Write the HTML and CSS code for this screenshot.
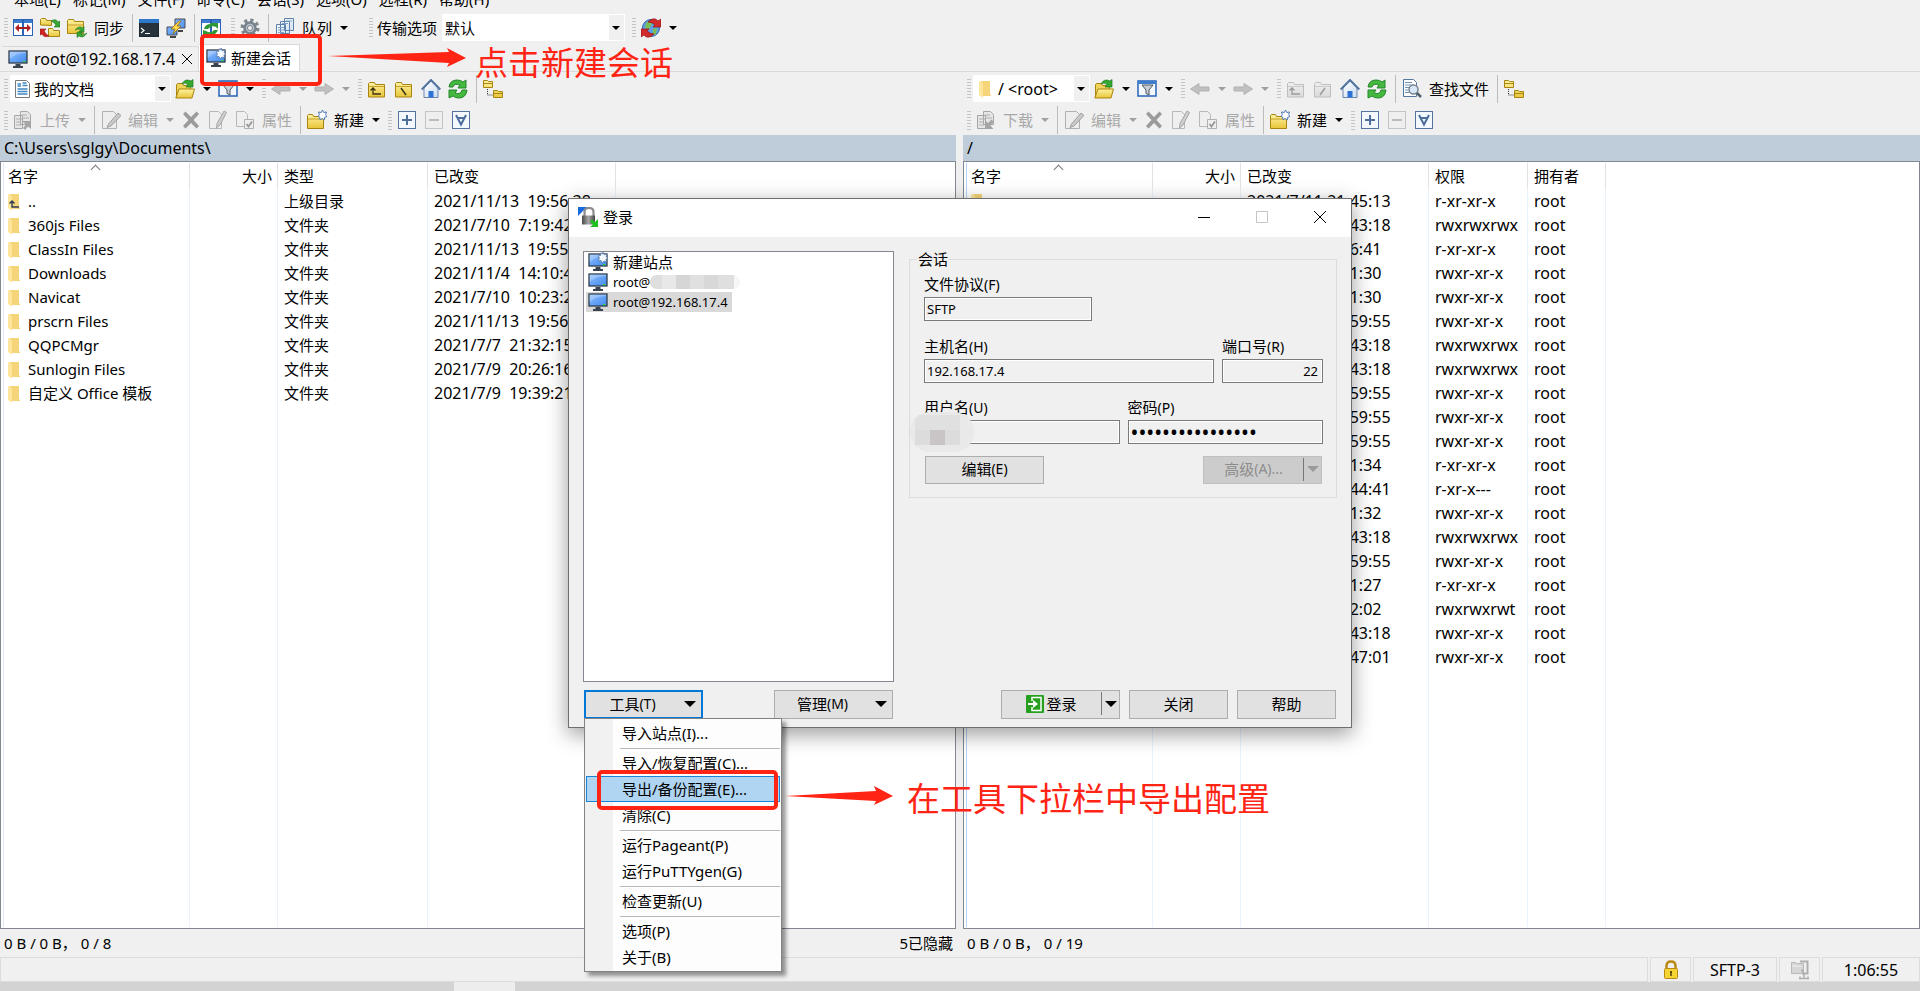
FILE: index.html
```html
<!DOCTYPE html>
<html lang="zh-CN">
<head>
    <meta charset="UTF-8">
    <meta name="viewport" content="width=device-width, initial-scale=1.0">
    <title>root@192.168.17.4</title>
    <link rel="stylesheet" href="styles.css">
</head>
<body>
    <!-- Icon set -->
    <svg class="defs" width="0" height="0">
        <defs>
            <linearGradient id="gold" x1="0" y1="0" x2="0" y2="1"><stop offset="0" stop-color="#fdf3a0"/><stop offset="1" stop-color="#e9c53a"/></linearGradient>
            <linearGradient id="screen" x1="0" y1="0" x2="1" y2="1"><stop offset="0" stop-color="#8fc1ff"/><stop offset="1" stop-color="#3f87ee"/></linearGradient>
            <linearGradient id="sheet" x1="0" y1="0" x2="1" y2="1"><stop offset="0" stop-color="#ffffff"/><stop offset="1" stop-color="#c9dcf0"/></linearGradient>
            <linearGradient id="metal" x1="0" y1="0" x2="1" y2="0"><stop offset="0" stop-color="#4a4a4a"/><stop offset=".5" stop-color="#a8a8a8"/><stop offset="1" stop-color="#444"/></linearGradient>
        </defs>
        <symbol id="i-split" viewBox="0 0 20 20"><rect x=".5" y="1.5" width="19" height="16" fill="#fff" stroke="#2b63b4"/><rect x="1" y="2" width="18" height="3" fill="#3c7dd0"/><path d="M10 2v16" stroke="#2b63b4" stroke-width="2"/><path d="M4 10h12" stroke="#a32020" stroke-width="2"/><path d="M2 10l4-4v8zM18 10l-4-4v8z" fill="#b32020"/></symbol>
        <symbol id="i-syncdirs" viewBox="0 0 20 20"><path d="M.5 7V1.500l1-1h4l1 2h5v5z" fill="url(#gold)" stroke="#a88411"/><path d="M8.500 18.500v-8h4l1 2h6v6z" fill="url(#gold)" stroke="#a88411"/><path d="M11 3q5-3 7 1l2-1v6h-6l2-2q-2-3-5-4z" fill="#3aa636" stroke="#227a20" stroke-width=".6"/><path d="M9 18q-5 2-7-2l-2 1v-6h6l-2 2q2 4 5 5z" fill="#d02424" stroke="#8d1414" stroke-width=".6"/></symbol>
        <symbol id="i-syncfolder" viewBox="0 0 20 20"><path d="M.5 15.500V2.500l1-1h5l1 2h9v12z" fill="url(#gold)" stroke="#a88411"/><path d="M1 7h15" stroke="#c6a02a"/><path d="M8 12q4-5 8-2l1-1.500V14h-5l1.500-1.500Q11 10 8 12zM20 15q-4 6-8 3l-2 1.500V14h5.500L14 15.500q3 2 6-.5z" fill="#3aa636" stroke="#227a20" stroke-width=".6"/></symbol>
        <symbol id="i-terminal" viewBox="0 0 20 20"><rect x=".5" y="1.500" width="19" height="17" fill="#28323c" stroke="#1d2730"/><path d="M0 1h20v4H0z" fill="#2e78cc"/><path d="M2 10l3 2.500L2 15M6 15.500h5" fill="none" stroke="#fff" stroke-width="1.200"/></symbol>
        <symbol id="i-putty" viewBox="0 0 20 20"><path d="M9 1h10v9H9zM1 9h10v8H1z" fill="url(#screen)" stroke="#4b4b55"/><path d="M12 12h5v2h-5zM4 18h6v2H4z" fill="#444"/><path d="M13 3L5 11h4l-2 5 8-8h-4l4-5z" fill="#ffd84a" stroke="#9a6d10" stroke-width=".8"/></symbol>
        <symbol id="i-refreshpanes" viewBox="0 0 20 20"><rect x=".5" y="1.500" width="19" height="17" fill="#fff" stroke="#2b63b4"/><path d="M1 2h18v3H1z" fill="#3c7dd0"/><path d="M10 2v16" stroke="#2b63b4" stroke-width="2"/><path d="M3 11q1-5 7-5l-1-1h8v6l-2-2q-5-2-8 2zM17 12q-2 5-7 5l1 1H2v-6l3 1q5 3 8-1z" fill="#2f9a35"/></symbol>
        <symbol id="i-gear" viewBox="0 0 20 20"><circle cx="10" cy="10" r="7.500" fill="none" stroke="#7d8790" stroke-width="4" stroke-dasharray="3 2.890"/><circle cx="10" cy="10" r="5.500" fill="#b7c0c8" stroke="#77828c" stroke-width="2.500"/><circle cx="10" cy="10" r="2.500" fill="#f0f0f0" stroke="#77828c"/></symbol>
        <symbol id="i-queue" viewBox="0 0 20 20"><path d="M9.500.5h9v12h-9zM5.500 3.500h9v12h-9zM1.500 6.500h9v12h-9z" fill="url(#sheet)" stroke="#5c82ac"/><path d="M3 9.500h6M3 12h6M3 14.500h6M11 3h6M7 5.500h6" stroke="#7ea3c9"/></symbol>
        <symbol id="i-globe" viewBox="0 0 20 20"><circle cx="10" cy="10" r="8.500" fill="#5e9fe6" stroke="#2f62a8"/><path d="M5 5q4-3 6 1l-3 5-4-1zM12 11l4-1-1 6-3 1z" fill="#7bbf53"/><path d="M7 4q6-6 10-1l3-2v8h-8l2-2q-3-3-7-3zM13 16q-6 6-10 1l-3 2v-8h8l-2 2q3 3 7 3z" fill="#d22b2b" stroke="#8d1616" stroke-width=".7"/></symbol>
        <symbol id="i-monitor" viewBox="0 0 20 20"><rect x="1" y="2" width="18" height="12" fill="url(#screen)" stroke="#2f3b49" stroke-width="1.300"/><path d="M1.500 10Q8 4 18 4V2.500H1.500z" fill="#fff" opacity=".25"/><path d="M7.500 15h5v2h-5zM5 17h10v2H5z" fill="#3a4450"/><path d="M15 12h2.500v1.200H15z" fill="#35d235"/></symbol>
        <symbol id="i-newmonitor" viewBox="0 0 20 20"><use href="#i-monitor"/><path d="M15 0l1.200 2.800L19 2l-.9 2.800L20 6l-2 1.200.5 2.800-2.700-.9L14 11l-1-2.500-2.900.3L11.500 6 10 4l2.700-.5.3-2.700L15 2z" fill="#f4faff" stroke="#5878a4" stroke-width=".8"/></symbol>
        <symbol id="i-doc" viewBox="0 0 20 20"><path d="M3.500 1.500h11l3 3v14h-14z" fill="#fff" stroke="#777"/><path d="M5.500 5H9M5.500 7h3.500M10.500 4h4M10.500 6.500h5M5.500 10h10M5.500 12.500h10M5.500 15h10" stroke="#3c86c4" stroke-width="1.300"/></symbol>
        <symbol id="i-open" viewBox="0 0 20 20"><path d="M1.500 18.500V5.500l1-1h5l1 2h7v12z" fill="#f0d35b" stroke="#a88411"/><path d="M.8 19L4 10h15.500L17 19z" fill="url(#gold)" stroke="#a88411"/><path d="M7 5q3-6 9-3l2-1.500V8h-7l2-2.500Q10 3 7 5z" fill="#35a832" stroke="#1e7a1e" stroke-width=".7"/></symbol>
        <symbol id="i-filter" viewBox="0 0 20 20"><rect x="1" y="2" width="18" height="15" fill="#f3f8fe" stroke="#2463b6" stroke-width="1.500"/><path d="M1 2h18v3H1z" fill="#3c7dd0"/><path d="M5 6h11l-4 5v5l-3-1.500V11z" fill="#c8ced6" stroke="#4d5661"/></symbol>
        <symbol id="i-back" viewBox="0 0 20 20"><path d="M.5 10L9 4.500V8h10v4H9v3.500z" fill="#c0c0c0" stroke="#b2b2b2"/></symbol>
        <symbol id="i-forward" viewBox="0 0 20 20"><path d="M19.500 10L11 4.500V8H1v4h10v3.500z" fill="#c0c0c0" stroke="#b2b2b2"/></symbol>
        <symbol id="i-up" viewBox="0 0 20 20"><path d="M1.500 18V4.500l1-1h5l1 2h9V18z" fill="url(#gold)" stroke="#a88411"/><path d="M2 7.500h15" stroke="#c6a02a"/><path d="M6 9v6h8M3.500 11.500L6 9l2.500 2.500" fill="none" stroke="#3a3410" stroke-width="1.300"/></symbol>
        <symbol id="i-rootdir" viewBox="0 0 20 20"><path d="M1.500 18V4.500l1-1h5l1 2h9V18z" fill="url(#gold)" stroke="#a88411"/><path d="M2 7.500h15" stroke="#c6a02a"/><path d="M7 9l5 7" stroke="#3a3410" stroke-width="1.500"/></symbol>
        <symbol id="i-rootslash" viewBox="0 0 20 20"><path d="M1.500 18V4.500l1-1h5l1 2h9V18z" fill="url(#gold)" stroke="#a88411"/><path d="M2 7.500h15" stroke="#c6a02a"/><path d="M12 9l-5 7" stroke="#3a3410" stroke-width="1.500"/></symbol>
        <symbol id="i-home" viewBox="0 0 20 20"><path d="M3 9v9.500h14V9l-7-7z" fill="url(#sheet)" stroke="#6b86ab"/><path d="M.7 10.500L10 1l9.300 9.500" fill="none" stroke="#53749f" stroke-width="2"/><path d="M7.500 12h5v6.500h-5z" fill="#2d73d6"/></symbol>
        <symbol id="i-refresh" viewBox="0 0 20 20"><path d="M1 8Q2 1 9 1q4 0 6 2l3-2v8h-8l2-3Q6 4 5 8zM19 11q-1 8-8 8-4 0-6-2l-4 2v-8h8l-2 3q6 2 7-3z" fill="#45b83f" stroke="#23862a"/></symbol>
        <symbol id="i-tree" viewBox="0 0 20 20"><path d="M.5 8.500V1.500h4l1 1h4v6zM10.500 18.500v-7h4l1 1h4v6z" fill="url(#gold)" stroke="#a88411"/><path d="M.5 4.500h9M10.500 14.500h9" stroke="#a88411"/><path d="M4.500 10v6h5" fill="none" stroke="#333" stroke-dasharray="1 1"/></symbol>
        <symbol id="i-find" viewBox="0 0 20 20"><path d="M1.500.5h10l3 3v14h-13z" fill="#fff" stroke="#54779f"/><path d="M3 3.500h7M3 6h9M3 8.500h4M3 11h3M3 13.500h4" stroke="#6c92ba"/><circle cx="11.500" cy="10.500" r="4.500" fill="#d5e7f8" stroke="#7b858e" stroke-width="1.500"/><path d="M15 14l4 4" stroke="#56606a" stroke-width="2.500"/></symbol>
        <symbol id="i-copy" viewBox="0 0 20 20"><path d="M7.500 1.500h7l3 3v10h-10zM1.500 5.500h8v13h-8z" fill="#e6e6e6" stroke="#a6a6a6"/><path d="M3 9h6M3 12h5M3 15h5M9 5h5M9 8h7" stroke="#b0b0b0"/><path d="M9 11h9v8l-3-2.500L12 20l-2-2 3-3.500z" fill="#a5a5a5"/></symbol>
        <symbol id="i-copydown" viewBox="0 0 20 20"><path d="M7.500 1.500h7l3 3v10h-10zM1.500 5.500h8v13h-8z" fill="#e6e6e6" stroke="#a6a6a6"/><path d="M3 9h6M3 12h5M3 15h5M9 5h5M9 8h7" stroke="#b0b0b0"/><path d="M9 19v-9l3 3 3.500-3.500 2.500 2.500-3.500 3.500 3 3.500z" fill="#a5a5a5"/></symbol>
        <symbol id="i-edit" viewBox="0 0 20 20"><path d="M1.500 1.500h11l3 3v14h-14z" fill="#ededed" stroke="#b0b0b0"/><path d="M17 3l3 2.500L10 16l-4 1.500L7.500 14z" fill="#c8c8c8" stroke="#a2a2a2"/></symbol>
        <symbol id="i-delete" viewBox="0 0 20 20"><path d="M2 4l2.500-2.500L10 7l5.500-5.500L18 4l-5.500 6L18 16l-2.500 2.500L10 13l-5.500 5.500L2 16l5.500-6z" fill="#9b9b9b"/></symbol>
        <symbol id="i-rename" viewBox="0 0 20 20"><path d="M1.500 1.500h9l3 3v14h-12z" fill="#efefef" stroke="#b8b8b8"/><path d="M16 1l2.500 1.500L12 15l-3.500 3 .5-4.500z" fill="#cfcfcf" stroke="#a6a6a6"/></symbol>
        <symbol id="i-props" viewBox="0 0 20 20"><path d="M1.500 1.500h8l3 3v12h-11z" fill="#efefef" stroke="#b8b8b8"/><path d="M9.500 9.500h9v9h-9z" fill="#efefef" stroke="#b0b0b0"/><path d="M11.500 14l2 2.500 3.500-5" fill="none" stroke="#979797" stroke-width="1.800"/></symbol>
        <symbol id="i-newfolder" viewBox="0 0 20 20"><path d="M.5 18.500V5.500l1-1h4l1 2h10v12z" fill="url(#gold)" stroke="#a88411"/><path d="M1 9h15" stroke="#c6a02a"/><path d="M15.500 0l1.200 2.500L19.500 2l-.9 2.600L20 6.500l-2.300.7-.2 2.600-2.200-1.300-2.300 1.300-.2-2.600L11 6.500l1.400-1.900L11.500 2l2.800.5z" fill="#fff" stroke="#4f79b5"/></symbol>
        <symbol id="i-plus" viewBox="0 0 20 20"><rect x="1.500" y="1.500" width="17" height="17" fill="#f3f8fe" stroke="#54749f"/><path d="M10 5v10M5 10h10" stroke="#4c6e9d" stroke-width="2"/></symbol>
        <symbol id="i-minus" viewBox="0 0 20 20"><rect x="1.500" y="1.500" width="17" height="17" fill="#efefef" stroke="#c4c4c4"/><path d="M5 10h10" stroke="#bcbcbc" stroke-width="2"/></symbol>
        <symbol id="i-invert" viewBox="0 0 20 20"><rect x="1.500" y="1.500" width="17" height="17" fill="#f3f8fe" stroke="#54749f"/><path d="M5 5l5 9.500L15 5M6.500 8h7" fill="none" stroke="#4c6e9d" stroke-width="2"/></symbol>
        <symbol id="i-folder" viewBox="0 0 12 18"><path d="M2 1h9v13l1 1v1H2z" fill="#f6d57a"/><path d="M0 1l4 2v15l-4-3z" fill="#fde69b"/></symbol>
        <symbol id="i-parent" viewBox="0 0 12 18"><use href="#i-folder"/><path d="M4 8v6h7M1.500 10.500L4 8l2.500 2.500" fill="none" stroke="#2d3c50" stroke-width="1.400"/></symbol>
        <symbol id="i-app" viewBox="0 0 20 20"><path d="M0 0h9L0 9z" fill="#1769e0"/><path d="M6.500 9V5q0-4 4.500-4t4.500 4v4" fill="none" stroke="#8b8b8b" stroke-width="2.200"/><rect x="4" y="8.500" width="13" height="9" fill="url(#metal)"/><path d="M20 12v8h-8l3-2.500-3-3 2-2 3 2.500z" fill="#1fc11f"/></symbol>
        <symbol id="i-login" viewBox="0 0 18 18"><rect width="18" height="18" rx="1" fill="#27a01f"/><path d="M6 6V2.500h9v13H6V12" fill="none" stroke="#fff" stroke-width="1.500"/><path d="M2 8h5V5l5 4-5 4v-3H2z" fill="#fff"/></symbol>
        <symbol id="i-lock" viewBox="0 0 20 20"><path d="M5.500 9V6q0-4.500 4.500-4.500T14.500 6v3" fill="none" stroke="#b88a14" stroke-width="2.500"/><rect x="3.500" y="8.500" width="13" height="10" rx="1" fill="#f3d432" stroke="#b88a14"/><path d="M10 11v5M9 12h2" stroke="#5b420a" stroke-width="1.500"/></symbol>
        <symbol id="i-archive" viewBox="0 0 20 20"><path d="M1.500 13.500v-11h4l1 1h7v10z" fill="#d6d6d6" stroke="#b8b8b8"/><path d="M2 6h9" stroke="#efefef"/><path d="M10 1.500h7.500v12H13v-3h-2" fill="none" stroke="#b0b0b0" stroke-width="2"/><path d="M14 14v4M9 18.500h10M10 16.500v3M18 16.500v3" fill="none" stroke="#b0b0b0" stroke-width="1.500"/></symbol>
    </svg>

    <nav class="menubar">
        <a href="#">本地(L)</a><a href="#">标记(M)</a><a href="#">文件(F)</a><a href="#">命令(C)</a><a href="#">会话(S)</a><a href="#">选项(O)</a><a href="#">远程(R)</a><a href="#">帮助(H)</a>
    </nav>

    <div class="toolbar main">
        <div class="group">
            <button class="tool"><svg><use href="#i-split"/></svg></button>
            <button class="tool"><svg><use href="#i-syncdirs"/></svg></button>
            <button class="tool"><svg><use href="#i-syncfolder"/></svg>同步</button>
            <i class="sep"></i>
            <button class="tool"><svg><use href="#i-terminal"/></svg></button>
            <button class="tool"><svg><use href="#i-putty"/></svg></button>
            <i class="sep"></i>
            <button class="tool"><svg><use href="#i-refreshpanes"/></svg></button>
        </div>
        <div class="group wide">
            <button class="tool"><svg><use href="#i-gear"/></svg></button>
            <i class="sep"></i>
            <button class="tool"><svg><use href="#i-queue"/></svg>队列</button>
            <button class="caret" aria-label="队列"></button>
        </div>
        <div class="group">
            <label class="tool-label" for="transfer">传输选项</label>
            <div class="combo transfer">
                <select id="transfer"><option>默认</option></select>
            </div>
        </div>
        <div class="group">
            <button class="tool"><svg><use href="#i-globe"/></svg></button>
            <button class="caret" aria-label="更多"></button>
        </div>
    </div>

    <div class="tabs">
        <div class="tab">
            <svg><use href="#i-monitor"/></svg><a href="#">root@192.168.17.4</a>
            <button class="tab-close" aria-label="关闭"><svg viewBox="0 0 12 12"><path d="M1 1l10 10M11 1L1 11"/></svg></button>
        </div>
        <div class="tab active"><svg><use href="#i-newmonitor"/></svg><a href="#">新建会话</a></div>
    </div>

    <main class="panes">
        <section class="pane">
            <div class="toolbar nav">
                <div class="group">
                    <div class="combo drive">
                        <svg><use href="#i-doc"/></svg>
                        <select aria-label="位置"><option>我的文档</option></select>
                    </div>
                    <button class="tool"><svg><use href="#i-open"/></svg></button>
                    <button class="caret" aria-label="打开"></button>
                    <button class="tool"><svg><use href="#i-filter"/></svg></button>
                    <button class="caret" aria-label="过滤"></button>
                </div>
                <div class="group">
                    <button class="tool" disabled><svg><use href="#i-back"/></svg></button>
                    <button class="caret" aria-label="后退" disabled></button>
                    <button class="tool" disabled><svg><use href="#i-forward"/></svg></button>
                    <button class="caret" aria-label="前进" disabled></button>
                </div>
                <div class="group">
                    <button class="tool"><svg><use href="#i-up"/></svg></button>
                    <button class="tool"><svg><use href="#i-rootdir"/></svg></button>
                    <button class="tool"><svg><use href="#i-home"/></svg></button>
                    <button class="tool"><svg><use href="#i-refresh"/></svg></button>
                    <i class="sep"></i>
                    <button class="tool"><svg><use href="#i-tree"/></svg></button>
                </div>
            </div>
            <div class="toolbar files">
                <div class="group">
                    <button class="tool" disabled><svg><use href="#i-copy"/></svg>上传</button>
                    <button class="caret" aria-label="上传" disabled></button>
                    <i class="sep"></i>
                    <button class="tool" disabled><svg><use href="#i-edit"/></svg>编辑</button>
                    <button class="caret" aria-label="编辑" disabled></button>
                    <button class="tool" disabled><svg><use href="#i-delete"/></svg></button>
                    <button class="tool" disabled><svg><use href="#i-rename"/></svg></button>
                    <button class="tool" disabled><svg><use href="#i-props"/></svg>属性</button>
                    <i class="sep"></i>
                    <button class="tool"><svg><use href="#i-newfolder"/></svg>新建</button>
                    <button class="caret" aria-label="新建"></button>
                </div>
                <div class="group">
                    <button class="tool"><svg><use href="#i-plus"/></svg></button>
                    <button class="tool" disabled><svg><use href="#i-minus"/></svg></button>
                    <button class="tool"><svg><use href="#i-invert"/></svg></button>
                </div>
            </div>
            <div class="path">C:\Users\sglgy\Documents\</div>
            <div class="list">
                <table class="local">
                    <colgroup><col class="c-name"><col class="c-size"><col class="c-type"><col class="c-date"><col></colgroup>
                    <thead>
                        <tr><th class="sorted">名字</th><th class="num">大小</th><th>类型</th><th>已改变</th><th></th></tr>
                    </thead>
                    <tbody>
                        <tr><td><svg><use href="#i-parent"/></svg>..</td><td></td><td>上级目录</td><td class="date">2021/11/13  19:56:38</td><td></td></tr>
                        <tr><td><svg><use href="#i-folder"/></svg>360js Files</td><td></td><td>文件夹</td><td class="date">2021/7/10  7:19:42</td><td></td></tr>
                        <tr><td><svg><use href="#i-folder"/></svg>ClassIn Files</td><td></td><td>文件夹</td><td class="date">2021/11/13  19:55:</td><td></td></tr>
                        <tr><td><svg><use href="#i-folder"/></svg>Downloads</td><td></td><td>文件夹</td><td class="date">2021/11/4  14:10:4</td><td></td></tr>
                        <tr><td><svg><use href="#i-folder"/></svg>Navicat</td><td></td><td>文件夹</td><td class="date">2021/7/10  10:23:2</td><td></td></tr>
                        <tr><td><svg><use href="#i-folder"/></svg>prscrn Files</td><td></td><td>文件夹</td><td class="date">2021/11/13  19:56:</td><td></td></tr>
                        <tr><td><svg><use href="#i-folder"/></svg>QQPCMgr</td><td></td><td>文件夹</td><td class="date">2021/7/7  21:32:15</td><td></td></tr>
                        <tr><td><svg><use href="#i-folder"/></svg>Sunlogin Files</td><td></td><td>文件夹</td><td class="date">2021/7/9  20:26:16</td><td></td></tr>
                        <tr><td><svg><use href="#i-folder"/></svg>自定义 Office 模板</td><td></td><td>文件夹</td><td class="date">2021/7/9  19:39:21</td><td></td></tr>
                        <tr class="fill"><td></td><td></td><td></td><td></td><td></td></tr>
                    </tbody>
                </table>
            </div>
            <div class="summary"><span>0 B / 0 B， 0 / 8</span><span>5已隐藏</span></div>
        </section>

        <section class="pane remote-pane">
            <div class="toolbar nav">
                <div class="group">
                    <div class="combo remote-root">
                        <svg class="narrow"><use href="#i-folder"/></svg>
                        <select aria-label="位置"><option>/ &lt;root&gt;</option></select>
                    </div>
                    <button class="tool"><svg><use href="#i-open"/></svg></button>
                    <button class="caret" aria-label="打开"></button>
                    <button class="tool"><svg><use href="#i-filter"/></svg></button>
                    <button class="caret" aria-label="过滤"></button>
                </div>
                <div class="group">
                    <button class="tool" disabled><svg><use href="#i-back"/></svg></button>
                    <button class="caret" aria-label="后退" disabled></button>
                    <button class="tool" disabled><svg><use href="#i-forward"/></svg></button>
                    <button class="caret" aria-label="前进" disabled></button>
                </div>
                <div class="group">
                    <button class="tool off" disabled><svg><use href="#i-up"/></svg></button>
                    <button class="tool off" disabled><svg><use href="#i-rootslash"/></svg></button>
                    <button class="tool"><svg><use href="#i-home"/></svg></button>
                    <button class="tool"><svg><use href="#i-refresh"/></svg></button>
                    <i class="sep"></i>
                    <button class="tool"><svg><use href="#i-find"/></svg>查找文件</button>
                    <i class="sep"></i>
                    <button class="tool"><svg><use href="#i-tree"/></svg></button>
                </div>
            </div>
            <div class="toolbar files">
                <div class="group">
                    <button class="tool" disabled><svg><use href="#i-copydown"/></svg>下载</button>
                    <button class="caret" aria-label="下载" disabled></button>
                    <i class="sep"></i>
                    <button class="tool" disabled><svg><use href="#i-edit"/></svg>编辑</button>
                    <button class="caret" aria-label="编辑" disabled></button>
                    <button class="tool" disabled><svg><use href="#i-delete"/></svg></button>
                    <button class="tool" disabled><svg><use href="#i-rename"/></svg></button>
                    <button class="tool" disabled><svg><use href="#i-props"/></svg>属性</button>
                    <i class="sep"></i>
                    <button class="tool"><svg><use href="#i-newfolder"/></svg>新建</button>
                    <button class="caret" aria-label="新建"></button>
                </div>
                <div class="group">
                    <button class="tool"><svg><use href="#i-plus"/></svg></button>
                    <button class="tool" disabled><svg><use href="#i-minus"/></svg></button>
                    <button class="tool"><svg><use href="#i-invert"/></svg></button>
                </div>
            </div>
            <div class="path">/</div>
            <div class="list focused">
                <table class="remote">
                    <colgroup><col class="c-name"><col class="c-size"><col class="c-date"><col class="c-perm"><col class="c-owner"><col></colgroup>
                    <thead>
                        <tr><th class="sorted">名字</th><th class="num">大小</th><th>已改变</th><th>权限</th><th>拥有者</th><th></th></tr>
                    </thead>
                    <tbody>
                        <tr><td><svg><use href="#i-folder"/></svg></td><td></td><td class="date">2021/7/11 21:45:13</td><td class="lat">r-xr-xr-x</td><td class="lat">root</td><td></td></tr>
                        <tr><td></td><td></td><td class="date">2021/7/11 21:43:18</td><td class="lat">rwxrwxrwx</td><td class="lat">root</td><td></td></tr>
                        <tr><td></td><td></td><td class="date">2021/7/11 9:56:41</td><td class="lat">r-xr-xr-x</td><td class="lat">root</td><td></td></tr>
                        <tr><td></td><td></td><td class="date">2021/7/11 9:51:30</td><td class="lat">rwxr-xr-x</td><td class="lat">root</td><td></td></tr>
                        <tr><td></td><td></td><td class="date">2021/7/11 9:51:30</td><td class="lat">rwxr-xr-x</td><td class="lat">root</td><td></td></tr>
                        <tr><td></td><td></td><td class="date">2018/4/11 12:59:55</td><td class="lat">rwxr-xr-x</td><td class="lat">root</td><td></td></tr>
                        <tr><td></td><td></td><td class="date">2021/7/11 21:43:18</td><td class="lat">rwxrwxrwx</td><td class="lat">root</td><td></td></tr>
                        <tr><td></td><td></td><td class="date">2021/7/11 21:43:18</td><td class="lat">rwxrwxrwx</td><td class="lat">root</td><td></td></tr>
                        <tr><td></td><td></td><td class="date">2018/4/11 12:59:55</td><td class="lat">rwxr-xr-x</td><td class="lat">root</td><td></td></tr>
                        <tr><td></td><td></td><td class="date">2018/4/11 12:59:55</td><td class="lat">rwxr-xr-x</td><td class="lat">root</td><td></td></tr>
                        <tr><td></td><td></td><td class="date">2018/4/11 12:59:55</td><td class="lat">rwxr-xr-x</td><td class="lat">root</td><td></td></tr>
                        <tr><td></td><td></td><td class="date">2021/7/11 9:51:34</td><td class="lat">r-xr-xr-x</td><td class="lat">root</td><td></td></tr>
                        <tr><td></td><td></td><td class="date">2021/7/11 21:44:41</td><td class="lat">r-xr-x---</td><td class="lat">root</td><td></td></tr>
                        <tr><td></td><td></td><td class="date">2021/7/11 9:51:32</td><td class="lat">rwxr-xr-x</td><td class="lat">root</td><td></td></tr>
                        <tr><td></td><td></td><td class="date">2021/7/11 21:43:18</td><td class="lat">rwxrwxrwx</td><td class="lat">root</td><td></td></tr>
                        <tr><td></td><td></td><td class="date">2018/4/11 12:59:55</td><td class="lat">rwxr-xr-x</td><td class="lat">root</td><td></td></tr>
                        <tr><td></td><td></td><td class="date">2021/7/11 9:51:27</td><td class="lat">r-xr-xr-x</td><td class="lat">root</td><td></td></tr>
                        <tr><td></td><td></td><td class="date">2021/7/11 9:52:02</td><td class="lat">rwxrwxrwt</td><td class="lat">root</td><td></td></tr>
                        <tr><td></td><td></td><td class="date">2021/7/11 21:43:18</td><td class="lat">rwxr-xr-x</td><td class="lat">root</td><td></td></tr>
                        <tr><td></td><td></td><td class="date">2021/7/11 21:47:01</td><td class="lat">rwxr-xr-x</td><td class="lat">root</td><td></td></tr>
                        <tr class="fill"><td></td><td></td><td></td><td></td><td></td><td></td></tr>
                    </tbody>
                </table>
            </div>
            <div class="summary"><span>0 B / 0 B， 0 / 19</span></div>
        </section>
    </main>

    <footer class="statusbar">
        <div class="cell grow"></div>
        <div class="cell icon"><svg><use href="#i-lock"/></svg></div>
        <div class="cell proto">SFTP-3</div>
        <div class="cell icon"><svg><use href="#i-archive"/></svg></div>
        <div class="cell time">1:06:55</div>
    </footer>
    <div class="taskbar"><div class="task"></div></div>

    <!-- Login window -->
    <div class="dialog" role="dialog" aria-label="登录">
        <header class="titlebar">
            <svg class="app"><use href="#i-app"/></svg>
            <span>登录</span>
            <button aria-label="最小化"><svg viewBox="0 0 12 12"><path d="M0 6.500h12"/></svg></button>
            <button aria-label="最大化" disabled><svg viewBox="0 0 12 12"><path d="M.5.5h11v11H.5z"/></svg></button>
            <button aria-label="关闭"><svg viewBox="0 0 12 12"><path d="M0 0l12 12M12 0L0 12"/></svg></button>
        </header>
        <form class="login">
            <ul class="sites">
                <li><svg><use href="#i-newmonitor"/></svg><span class="cn">新建站点</span></li>
                <li><svg><use href="#i-monitor"/></svg>root@<span class="mosaic"></span></li>
                <li class="selected"><svg><use href="#i-monitor"/></svg>root@192.168.17.4</li>
            </ul>
            <fieldset>
                <legend>会话</legend>
                <div class="row">
                    <div class="field protocol"><label for="protocol">文件协议<small>(F)</small></label><input id="protocol" type="text" value="SFTP" readonly></div>
                </div>
                <div class="row">
                    <div class="field grow"><label for="host">主机名<small>(H)</small></label><input id="host" type="text" value="192.168.17.4" readonly></div>
                    <div class="field port"><label for="port">端口号<small>(R)</small></label><input id="port" type="text" value="22" readonly></div>
                </div>
                <div class="row">
                    <div class="field grow user"><label for="user">用户名<small>(U)</small></label><input id="user" type="text" readonly><span class="mosaic-user"></span></div>
                    <div class="field grow"><label for="pass">密码<small>(P)</small></label><input id="pass" type="password" value="0000000000000000" readonly></div>
                </div>
                <div class="actions">
                    <button type="button" class="btn">编辑<small>(E)</small></button>
                    <button type="button" class="btn split" disabled><span>高级<small>(A)...</small></span><i class="arrow"></i></button>
                </div>
            </fieldset>
            <div class="buttons left">
                <div class="dropdown">
                    <button type="button" class="btn drop open"><span>工具<small>(T)</small></span><i class="arrow"></i></button>
                    <div class="menu">
                        <button type="button">导入站点(I)...</button>
                        <hr>
                        <button type="button">导入/恢复配置(C)...</button>
                        <button type="button" class="hover">导出/备份配置(E)...</button>
                        <button type="button">清除(C)</button>
                        <hr>
                        <button type="button">运行Pageant(P)</button>
                        <button type="button">运行PuTTYgen(G)</button>
                        <hr>
                        <button type="button">检查更新(U)</button>
                        <hr>
                        <button type="button">选项(P)</button>
                        <button type="button">关于(B)</button>
                    </div>
                </div>
                <button type="button" class="btn drop"><span>管理<small>(M)</small></span><i class="arrow"></i></button>
            </div>
            <div class="buttons right">
                <button type="button" class="btn split"><span><svg><use href="#i-login"/></svg>登录</span><i class="arrow"></i></button>
                <button type="button" class="btn short">关闭</button>
                <button type="button" class="btn short">帮助</button>
            </div>
        </form>
        <!-- Second note -->
        <div class="note box-export"></div>
        <div class="note callout-export">
            <svg viewBox="0 0 108 20"><path d="M0 10l91-5-2-5 19 10-19 9 2-4z"/></svg>
            <span>在工具下拉栏中导出配置</span>
        </div>
    </div>

    <!-- First note -->
    <div class="note box-tab"></div>
    <div class="note callout-tab">
        <svg viewBox="0 0 138 20"><path d="M0 8l121-4-2-4 19 10-19 9 2-4z"/></svg>
        <span>点击新建会话</span>
    </div>
</body>
</html>
```
FILE: styles.css
```css
* {
    box-sizing: border-box;
}
body {
    margin: 0;
    height: 100vh;
    display: flex;
    flex-direction: column;
    overflow: hidden;
    position: relative;
    background: #f0f0f0;
    color: #000;
    font-family: "Noto Sans", "Noto Sans CJK SC", sans-serif;
    font-size: 15px;
    line-height: 20px;
}
a {
    color: inherit;
    text-decoration: none;
}
button, input, select {
    font: inherit;
    color: inherit;
    margin: 0;
}
svg {
    width: 20px;
    height: 20px;
    flex: none;
}
.defs {
    position: absolute;
    width: 0;
    height: 0;
}

/* Menu, scrolled half out of the window */
.menubar {
    height: 11px;
    overflow: hidden;
    display: flex;
    align-items: flex-end;
    padding-left: 8px;
}
.menubar a {
    padding: 0 6px;
    line-height: 24px;
}

/* Toolbars */
.toolbar {
    display: flex;
    align-items: center;
    flex: none;
    white-space: nowrap;
}
.toolbar.main, .toolbar.nav {
    height: 33px;
}
.toolbar.files {
    height: 30px;
}
.group {
    display: flex;
    align-items: center;
    gap: 1px;
    padding-right: 3px;
}
.nav .group, .files .group {
    padding-right: 1px;
}
.group.wide {
    padding-right: 14px;
}
.group::before {
    content: "";
    width: 4px;
    height: 19px;
    margin: 0 1px 0 4px;
    background: repeating-linear-gradient(#c4c4c4 0 1px, transparent 1px 3px);
}
.tool {
    display: flex;
    align-items: center;
    gap: 7px;
    height: 27px;
    padding: 0 3px;
    border: 0;
    background: none;
}
.tool:disabled {
    color: #a8a8a8;
}
.tool.off svg {
    filter: grayscale(1);
    opacity: .45;
}
.tool-label {
    padding: 0 4px 0 2px;
}
.sep {
    width: 1px;
    height: 28px;
    margin: 0 2px 0 4px;
    background: #bcbcbc;
}
.caret {
    width: 15px;
    height: 27px;
    padding: 0;
    border: 0;
    background: none;
    display: flex;
    align-items: center;
    justify-content: center;
}
.caret::before, .arrow::before {
    content: "";
    border: 4px solid transparent;
    border-top-color: #000;
    border-bottom: 0;
}
.caret:disabled::before {
    border-top-color: #a0a0a0;
}
.combo {
    display: flex;
    align-items: center;
    position: relative;
    height: 27px;
    background: #fff;
    border: 1px solid #fff;
}
.combo select {
    flex: 1;
    min-width: 0;
    height: 25px;
    padding: 0 2px;
    border: 0;
    background: none;
    appearance: none;
}
.combo svg {
    margin-left: 1px;
}
.combo svg.narrow {
    width: 12px;
    height: 18px;
    margin: 0 5px 0 5px;
}
.combo::after {
    content: "";
    width: 15px;
    height: 25px;
    background: #f0f0f0;
}
.combo::before {
    content: "";
    position: absolute;
    right: 4px;
    top: 11px;
    border: 4px solid transparent;
    border-top-color: #000;
    border-bottom: 0;
}
.combo.transfer {
    width: 183px;
}
.combo.drive {
    width: 161px;
}
.combo.remote-root {
    width: 117px;
}
.remote-root select {
    font-size: 16px;
}

/* Session tabs */
.tabs {
    display: flex;
    height: 28px;
    flex: none;
    align-items: flex-end;
    border-bottom: 1px solid #d9d9d9;
    padding-left: 2px;
}
.tab {
    display: flex;
    align-items: center;
    gap: 6px;
    height: 25px;
    width: 197px;
    padding: 0 6px;
    font-size: 16px;
    white-space: nowrap;
    border-top: 1px solid #d9d9d9;
    border-right: 1px solid #d9d9d9;
}
.tab.active {
    height: 27px;
    width: 101px;
    padding: 0 7px;
    gap: 5px;
    background: #fff;
    font-size: 15px;
}
.tab-close {
    padding: 0;
    border: 0;
    background: none;
    display: flex;
}
.tab-close svg {
    width: 12px;
    height: 12px;
    stroke: #000;
}

/* Panes */
.panes {
    flex: 1;
    min-height: 0;
    display: flex;
    gap: 7px;
}
.pane {
    flex: 1;
    min-width: 0;
    display: flex;
    flex-direction: column;
}
.remote-pane {
    flex: none;
    width: calc(50% - 3px);
}
.path {
    height: 26px;
    padding-left: 4px;
    background: #bfcddb;
    font-size: 16px;
    line-height: 26px;
    flex: none;
}
.list {
    flex: 1;
    min-height: 0;
    padding: 1px 1px 1px 2px;
    border: 1px solid #828790;
    background: #fff;
}
table {
    width: 100%;
    height: 100%;
    table-layout: fixed;
    border-collapse: separate;
    border-spacing: 0;
    border-left: 1px solid #dce8f8;
}
.focused table {
    border-left-color: #b5d3f6;
}
th, td {
    height: 24px;
    padding: 0 0 0 6px;
    text-align: left;
    font-weight: 400;
    white-space: pre;
    overflow: hidden;
    border-right: 1px solid #eaf3fd;
}
th {
    height: 26px;
    border-right-color: #e2e2e2;
    position: relative;
}
th:first-child, td:first-child {
    padding-left: 4px;
}
th:last-child, td:last-child {
    border-right: 0;
}
th.num {
    text-align: right;
    padding-right: 5px;
}
th.sorted::after {
    content: "";
    position: absolute;
    left: 88px;
    top: 3px;
    width: 6px;
    height: 6px;
    border: solid #777;
    border-width: 1px 0 0 1px;
    transform: rotate(45deg);
}
td svg {
    width: 12px;
    height: 18px;
    margin-right: 8px;
    vertical-align: middle;
}
td.date, td.lat {
    font-size: 16px;
}
.fill td {
    height: auto;
}
.c-name {
    width: 186px;
}
.c-size {
    width: 88px;
}
.c-type {
    width: 150px;
}
.c-date {
    width: 188px;
}
.c-perm {
    width: 99px;
}
.c-owner {
    width: 78px;
}
.summary {
    display: flex;
    justify-content: space-between;
    height: 28px;
    padding: 0 3px 0 4px;
    line-height: 28px;
    white-space: pre;
    flex: none;
}

/* Bottom */
.statusbar {
    display: flex;
    gap: 2px;
    height: 25px;
    flex: none;
}
.cell {
    display: flex;
    align-items: center;
    justify-content: center;
    border: 1px solid #dcdcdc;
}
.cell.grow {
    flex: 1;
}
.cell.icon {
    width: 41px;
}
.cell.proto {
    width: 84px;
}
.cell.time {
    width: 98px;
}
.cell.proto, .cell.time {
    font-size: 16px;
}
.taskbar {
    height: 9px;
    flex: none;
    background: #d3d3d3;
    padding-left: 454px;
}
.task {
    width: 61px;
    height: 100%;
    background: #ededed;
}

/* Login window */
.dialog {
    position: absolute;
    left: calc(50% - 392px);
    top: 198px;
    width: 784px;
    border: 1px solid #6e6e6e;
    background: #f0f0f0;
    box-shadow: 0 6px 20px rgba(0, 0, 0, .4);
}
.titlebar {
    display: flex;
    align-items: center;
    height: 38px;
    background: #fff;
    padding: 0 2px 3px 9px;
}
.titlebar span {
    flex: 1;
    margin-left: 5px;
}
.titlebar button {
    width: 58px;
    height: 34px;
    padding: 0;
    border: 0;
    background: none;
    display: flex;
    align-items: center;
    justify-content: center;
}
.titlebar button svg {
    width: 12px;
    height: 12px;
    fill: none;
    stroke: #000;
    overflow: visible;
}
.titlebar button:disabled svg {
    stroke: #c4c4c4;
}
.login {
    display: grid;
    grid-template-columns: 311px 1fr;
    grid-template-rows: 431px 29px;
    gap: 8px 15px;
    padding: 14px 14px 8px;
}
.sites {
    margin: 0;
    padding: 0 2px;
    list-style: none;
    background: #fff;
    border: 1px solid #828790;
    font-size: 13px;
}
.sites li {
    display: flex;
    align-items: center;
    width: max-content;
    height: 20px;
    padding: 0 4px 0 2px;
}
.sites svg {
    margin-right: 5px;
}
.sites .cn {
    font-size: 15px;
}
.sites .selected {
    background: #d9d9d9;
}
.mosaic {
    width: 90px;
    height: 14px;
    border-radius: 7px;
    background: linear-gradient(90deg, #dedede 0 12px, #e8e8e8 12px 26px, #d6d6d6 26px 40px, #e0e0e0 40px 54px, #d8d8d8 54px 68px, #dfdfdf 68px 84px, #f6f6f6 84px);
}
fieldset {
    align-self: start;
    min-width: 0;
    margin: 0;
    padding: 7px 13px 13px 14px;
    border: 1px solid #dcdcdc;
}
legend {
    margin-left: -7px;
    padding: 0 1px;
    line-height: 16px;
}
.row {
    display: flex;
    gap: 8px;
    margin-bottom: 15px;
}
.row:nth-of-type(2) {
    margin-bottom: 14px;
}
.row:nth-of-type(3) {
    margin-bottom: 12px;
}
.field {
    display: flex;
    flex-direction: column;
    gap: 3px;
    position: relative;
}
.field label {
    height: 20px;
}
.field.grow {
    flex: 1;
}
.field.protocol {
    width: 168px;
}
.field.port {
    width: 101px;
}
.field input {
    width: 100%;
    height: 24px;
    padding: 0 2px;
    border: 1px solid #7a7a7a;
    outline: 1px solid #fff;
    outline-offset: -2px;
    background: #f0f0f0;
    font-size: 13px;
}
.field input[type="password"] {
    font-size: 21px;
}
.field.port input {
    text-align: right;
    padding-right: 4px;
}
small {
    font-size: 14px;
}
.mosaic-user {
    position: absolute;
    left: -14px;
    top: 15px;
    width: 64px;
    height: 40px;
    border-radius: 20px;
    background: linear-gradient(#c9c5c6, #c9c5c6) 20px 18px / 15px 15px no-repeat, linear-gradient(#dcdcdc, #dcdcdc) 5px 18px / 45px 15px no-repeat, linear-gradient(#e0e0e0, #e0e0e0) 5px 3px / 45px 15px no-repeat, #e9e9e9;
}
.actions {
    display: flex;
    justify-content: space-between;
    padding: 0 1px;
}
.btn {
    display: flex;
    align-items: center;
    justify-content: center;
    width: 119px;
    height: 29px;
    padding: 0 0 2px;
    border: 1px solid #adadad;
    background: #e1e1e1;
}
.actions .btn {
    height: 28px;
}
.btn.short {
    width: 99px;
}
.btn span {
    flex: 1;
    display: flex;
    align-items: center;
    justify-content: center;
}
.btn svg {
    width: 18px;
    height: 18px;
    margin-right: 2px;
}
.arrow {
    display: flex;
    align-items: center;
    justify-content: center;
    width: 22px;
    height: 23px;
}
.arrow::before {
    border-width: 6px 6px 0;
}
.btn.split .arrow {
    width: 18px;
    border-left: 1px solid #777;
}
.btn:disabled {
    color: #8c8c8c;
    background: #cccccc;
    border-color: #bfbfbf;
}
.btn:disabled .arrow::before {
    border-top-color: #9a9a9a;
}
.btn.open {
    border: 2px solid #0078d7;
}
.buttons {
    display: flex;
}
.buttons.left {
    justify-content: space-between;
    padding: 0 1px;
}
.buttons.right {
    justify-content: flex-end;
    gap: 9px;
    padding-right: 1px;
}
.dropdown {
    position: relative;
}
.menu {
    position: absolute;
    left: 0;
    top: 28px;
    width: 198px;
    padding: 1px;
    border: 1px solid #828282;
    background: linear-gradient(90deg, #f1f1f1 28px, #fdfdfd 28px);
    box-shadow: 4px 4px 4px rgba(0, 0, 0, .4);
}
.menu button {
    display: block;
    width: 100%;
    height: 26px;
    padding: 0 0 0 35px;
    border: 1px solid transparent;
    background: none;
    text-align: left;
    white-space: nowrap;
}
.menu .hover {
    background: #b0d5f2;
    border-color: #1883d7;
}
.menu hr {
    height: 1px;
    margin: 2px 0 1px 34px;
    border: 0;
    background: #b9b9b9;
}

/* Red notes */
.note {
    position: absolute;
    color: #ff2414;
    font-size: 33px;
    line-height: 40px;
    white-space: nowrap;
}
.note svg {
    height: 20px;
    fill: #ff2414;
}
.box-tab, .box-export {
    border: 4px solid #ff2414;
    border-radius: 5px;
}
.box-tab {
    left: 200px;
    top: 34px;
    width: 122px;
    height: 52px;
}
.callout-tab {
    left: 328px;
    top: 43px;
    display: flex;
    align-items: center;
    gap: 9px;
}
.callout-tab svg {
    width: 138px;
    margin-bottom: 10px;
}
.box-export {
    left: 28px;
    top: 571px;
    width: 181px;
    height: 40px;
}
.callout-export {
    left: 216px;
    top: 580px;
    display: flex;
    align-items: center;
    gap: 14px;
}
.callout-export svg {
    width: 108px;
    margin-bottom: 6px;
}
```
